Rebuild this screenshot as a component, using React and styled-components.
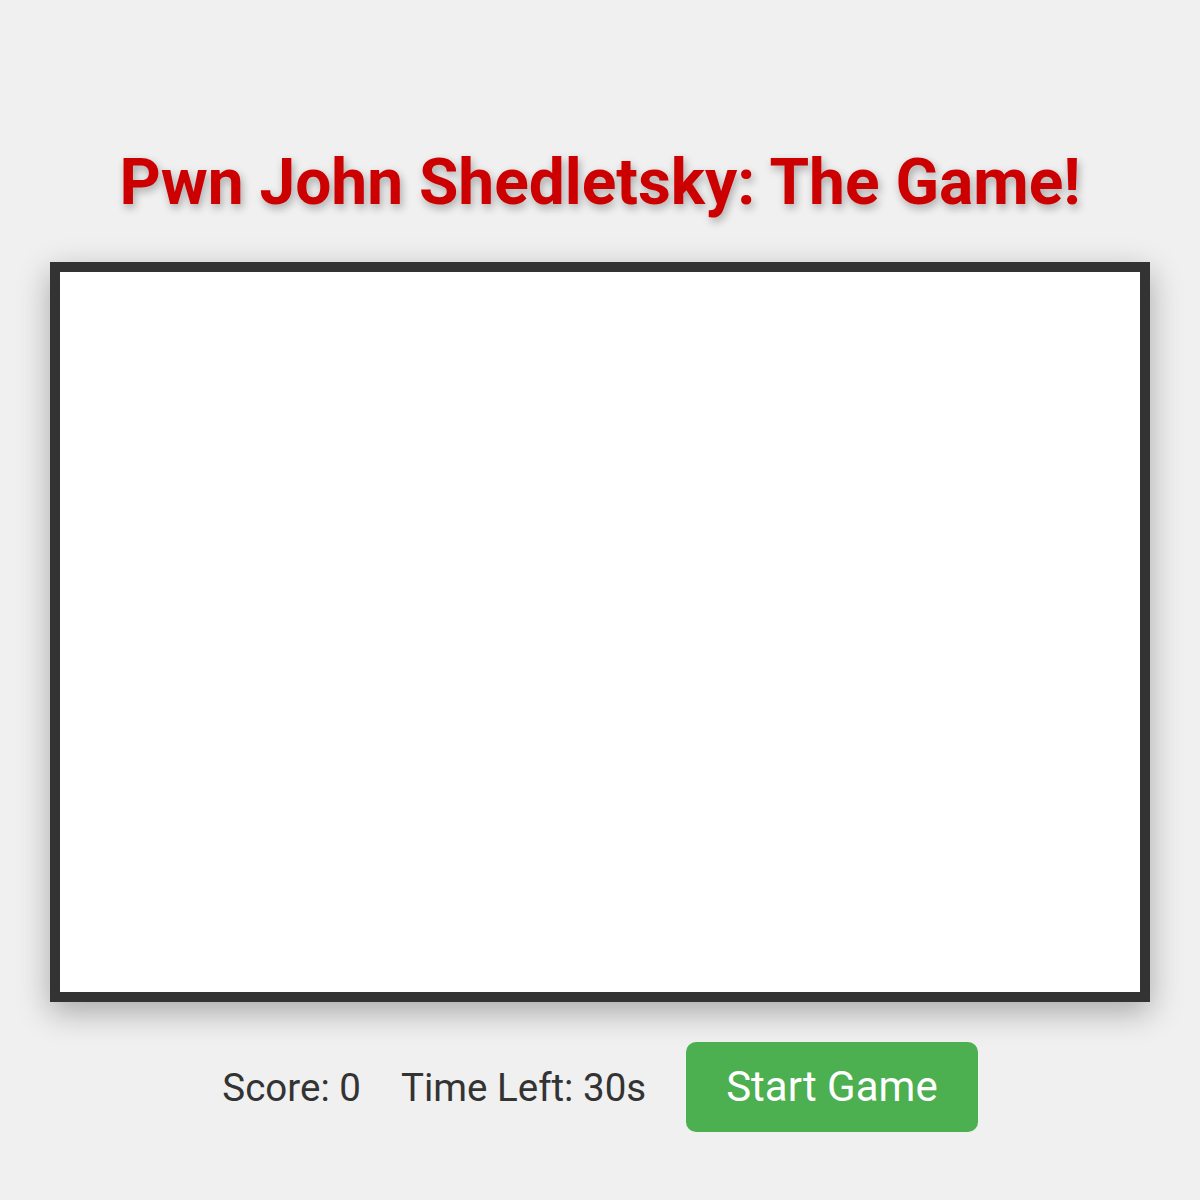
import React, { useState } from "react";
import styled, { createGlobalStyle } from "styled-components";

const GlobalStyle = createGlobalStyle`
  html, body {
    margin: 0;
    padding: 0;
    background: #f0f0f0;
    font-family: Roboto, "Liberation Sans", Arial, sans-serif;
  }
`;

const Page = styled.div`
  display: flex;
  flex-direction: column;
  align-items: center;
  padding-top: 145px;
  min-height: 1200px;
  box-sizing: border-box;
`;

const Title = styled.h1`
  margin: 0 0 42px;
  font-size: 64px;
  font-weight: 700;
  color: #cc0000;
  text-shadow: 2px 4px 8px rgba(0, 0, 0, 0.3);
  line-height: normal;
`;

const Board = styled.div`
  width: 1080px;
  height: 720px;
  background: #ffffff;
  border: 10px solid #333333;
  box-shadow: 0 10px 30px rgba(0, 0, 0, 0.3);
`;

const Controls = styled.div`
  display: flex;
  align-items: center;
  margin-top: 40px;
`;

const Stat = styled.span`
  font-size: 38.5px;
  color: #333333;
  margin: 0 20px;
`;

const StartButton = styled.button`
  margin: 0 20px;
  padding: 20px 40px;
  font-family: inherit;
  font-size: 42px;
  line-height: 50px;
  color: #ffffff;
  background: #4caf50;
  border: none;
  border-radius: 10px;
  cursor: pointer;
`;

export default function App() {
  const [score] = useState(0);
  const [timeLeft] = useState(30);
  return (
    <>
      <GlobalStyle />
      <Page>
        <Title>Pwn John Shedletsky: The Game!</Title>
        <Board />
        <Controls>
          <Stat>Score: {score}</Stat>
          <Stat>Time Left: {timeLeft}s</Stat>
          <StartButton>Start Game</StartButton>
        </Controls>
      </Page>
    </>
  );
}
